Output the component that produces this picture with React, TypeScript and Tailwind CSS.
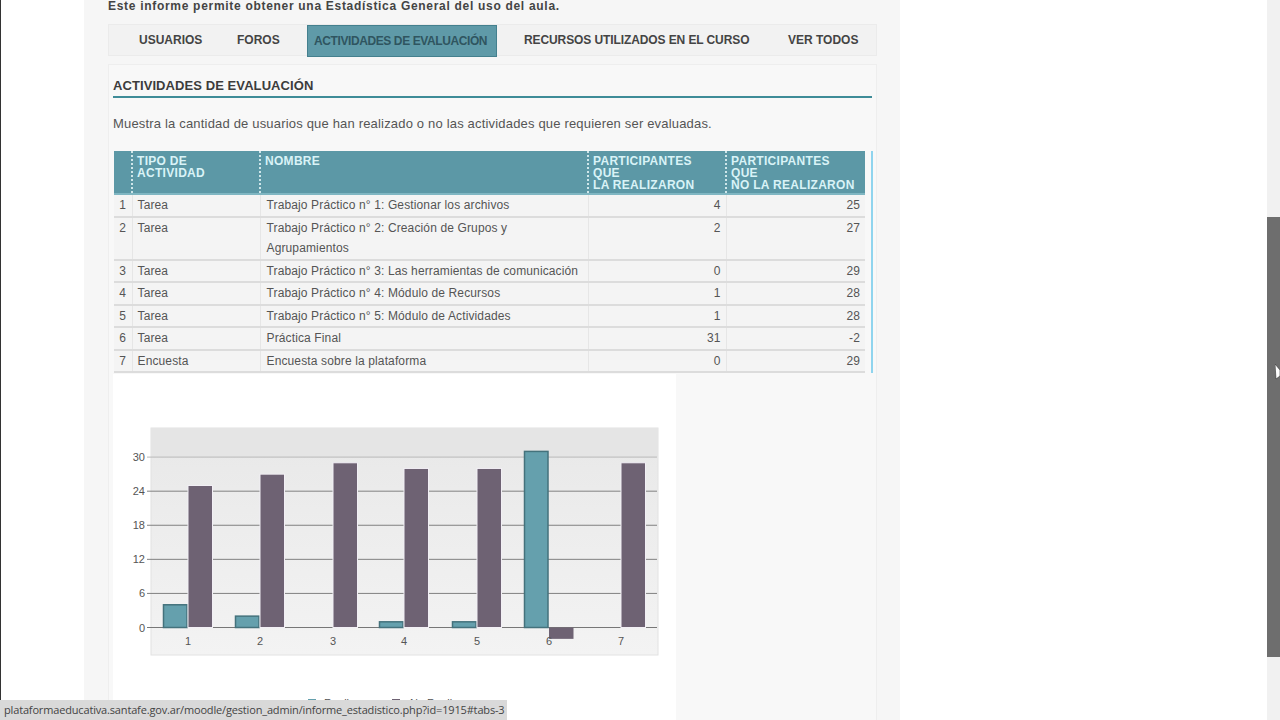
const font = { fontFamily: '"Liberation Sans", Arial, sans-serif' }

const rows = [
    { n: 1, tipo: "Tarea", nombre: "Trabajo Práctico n° 1: Gestionar los archivos", si: 4, no: 25 },
    { n: 2, tipo: "Tarea", nombre: "Trabajo Práctico n° 2: Creación de Grupos y Agrupamientos", si: 2, no: 27 },
    { n: 3, tipo: "Tarea", nombre: "Trabajo Práctico n° 3: Las herramientas de comunicación", si: 0, no: 29 },
    { n: 4, tipo: "Tarea", nombre: "Trabajo Práctico n° 4: Módulo de Recursos", si: 1, no: 28 },
    { n: 5, tipo: "Tarea", nombre: "Trabajo Práctico n° 5: Módulo de Actividades", si: 1, no: 28 },
    { n: 6, tipo: "Tarea", nombre: "Práctica Final", si: 31, no: -2 },
    { n: 7, tipo: "Encuesta", nombre: "Encuesta sobre la plataforma", si: 0, no: 29 },
]

const tabs = [
    { label: "USUARIOS", cls: "w-[124px] pl-[30px]" },
    { label: "FOROS", cls: "w-[74px] pl-[4px]" },
    { label: "ACTIVIDADES DE EVALUACIÓN", cls: "w-[190px] pl-[6px]" },
    { label: "RECURSOS UTILIZADOS EN EL CURSO", cls: "w-[264px] pl-[27px] tracking-[-0.1px]" },
    { label: "VER TODOS", cls: "w-[100px] pl-[27px]" },
]

function Tabs() {
    return (
        <div className="mt-[12px] flex h-[32px] w-[769px] border border-[#ebebeb] bg-[#f2f2f2]">
            {tabs.map((t, i) =>
                i === 2 ? (
                    <div key={t.label} className={`${t.cls} flex h-[32px] items-center whitespace-nowrap border border-[#44808e] bg-[#5f9aa8] text-[12px] font-bold tracking-[-0.4px] text-[#2f5560]`}>
                        {t.label}
                    </div>
                ) : (
                    <div key={t.label} className={`${t.cls} flex items-center whitespace-nowrap text-[12px] font-bold text-[#444]`}>
                        {t.label}
                    </div>
                )
            )}
        </div>
    )
}

function DataTable() {
    const th = "border-l-2 border-dotted border-[#cfe6ea] px-[4px] pt-[4px] text-left align-top text-[12px] font-bold leading-[12px] tracking-[0.3px] text-[#d9f3f7]"
    const td = "border-b-2 border-[#dcdcdc] px-[5px] align-top text-[12px] leading-[20.5px] tracking-[0.13px] text-[#555]"
    const cell = `${td} border-l border-l-[#e6e6e6]`
    return (
        <table className="w-[751px] table-fixed border-collapse">
            <colgroup>
                <col className="w-[18px]" />
                <col className="w-[128px]" />
                <col className="w-[328px]" />
                <col className="w-[138px]" />
                <col className="w-[139px]" />
            </colgroup>
            <thead>
                <tr className="h-[43px] border-b-2 border-[#7fb6c2] bg-[#5c98a6]">
                    <th></th>
                    <th className={th}>TIPO DE<br />ACTIVIDAD</th>
                    <th className={th}>NOMBRE</th>
                    <th className={th}>PARTICIPANTES<br />QUE<br />LA REALIZARON</th>
                    <th className={th}>PARTICIPANTES<br />QUE<br />NO LA REALIZARON</th>
                </tr>
            </thead>
            <tbody>
                {rows.map((r) => (
                    <tr key={r.n} className="bg-[#f4f4f4]">
                        <td className={`${td} text-center`}>{r.n}</td>
                        <td className={cell}>{r.tipo}</td>
                        <td className={`${cell} pl-[6px]`}>{r.nombre}</td>
                        <td className={`${cell} text-right`}>{r.si}</td>
                        <td className={`${cell} text-right`}>{r.no}</td>
                    </tr>
                ))}
            </tbody>
        </table>
    )
}

function Chart() {
    const zero = 253.5
    const unit = 5.68
    const centers = [75, 147, 220, 291, 364, 436, 508]
    return (
        <svg width="563" height="350" viewBox="0 0 563 350" className="mt-[1px] block" style={font}>
            <defs>
                <linearGradient id="fondo" x1="0" x2="0" y1="0" y2="1">
                    <stop offset="0" stopColor="#e8e8e8" />
                    <stop offset="1" stopColor="#f3f3f3" />
                </linearGradient>
            </defs>
            <rect width="563" height="350" fill="#ffffff" />
            <rect x="38" y="54" width="507" height="227" fill="url(#fondo)" stroke="#e2e2e2" />
            <rect x="38" y="54" width="507" height="29" fill="#e5e5e5" />
            {[0, 6, 12, 18, 24, 30].map((v) => {
                const y = zero - v * unit
                return (
                    <g key={v}>
                        <line x1="34" x2="544" y1={y} y2={y} stroke={v === 30 ? "#b9b9b9" : v === 0 ? "#777" : "#808080"} />
                        <text x="32" y={y + 4} textAnchor="end" fontSize="11" fill="#555">{v}</text>
                    </g>
                )
            })}
            {rows.map((r, i) => {
                const c = centers[i]
                const h1 = r.si * unit
                const h2 = r.no * unit
                return (
                    <g key={r.n}>
                        {r.si > 0 && (
                            <rect x={c - 24.5} y={zero - h1} width="23.5" height={h1} fill="#65a0ad" stroke="#44727c" strokeWidth="1.5" />
                        )}
                        {r.no > 0 ? (
                            <rect x={c} y={zero - h2} width="24.5" height={h2} fill="#6e6273" stroke="#f2eff5" />
                        ) : (
                            <rect x={c} y={zero} width="24.5" height={-h2} fill="#6e6273" />
                        )}
                        <text x={c} y={271} textAnchor="middle" fontSize="11" fill="#555">{r.n}</text>
                    </g>
                )
            })}
            {/* leyenda, tapada casi entera por la barra de estado */}
            <rect x="195" y="325" width="8" height="8" fill="#65a0ad" />
            <text x="211" y="333" fontSize="11" fill="#555">Realizaron</text>
            <rect x="279" y="325" width="8" height="8" fill="#6e6273" />
            <text x="297" y="333" fontSize="11" fill="#555">No Realizaron</text>
        </svg>
    )
}

export default function App() {
    return (
        <div className="relative flex h-[720px] w-[1280px] overflow-hidden bg-white" style={font}>
            <div className="w-[1px] bg-[#333]" />
            <div className="ml-[83px] h-full w-[816px] bg-[#f6f6f6] pl-[24px]">
                <p className="text-[12px] font-bold leading-[12px] tracking-[0.7px] text-[#444]">
                    Este informe permite obtener una Estadística General del uso del aula.
                </p>
                <Tabs />
                <div className="mt-[8px] h-[700px] w-[769px] border-x border-t border-[#eeeeee] bg-[#f8f8f8] pl-[4px] pt-[13px]">
                    <h2 className="mr-[4px] border-b-2 border-[#3f8c98] pb-[2px] text-[13px] font-bold leading-[16px] tracking-[0.08px] text-[#3c3c3c]">
                        ACTIVIDADES DE EVALUACIÓN
                    </h2>
                    <p className="mt-[18px] whitespace-nowrap text-[13px] leading-[16px] tracking-[0.18px] text-[#555]">
                        Muestra la cantidad de usuarios que han realizado o no las actividades que requieren ser evaluadas.
                    </p>
                    <div className="mt-[19px] flex">
                        <div className="ml-[1px]">
                            <DataTable />
                        </div>
                        <div className="ml-[6px] w-[2px] bg-[#8fd4ee]" />
                    </div>
                    <Chart />
                </div>
            </div>
            <div className="ml-auto flex h-full w-[13px] flex-col bg-[#f1f1f1] pt-[217px]">
                <div className="relative h-[440px] bg-[#6e6e6e]">
                    <svg width="5" height="16" viewBox="0 0 5 16" className="absolute right-0 top-[147px]">
                        <path d="M0 0 L5 6 L5 12 L1 15 Z" fill="#ffffff" stroke="#333333" strokeWidth="0.6" />
                    </svg>
                </div>
            </div>
            <div className="absolute bottom-0 left-0 flex h-[20px] w-[507px] items-center whitespace-nowrap bg-[#d9d9d9] pl-[4px] text-[11px] tracking-[-0.16px] text-[#444]" style={{ fontFamily: '"Open Sans", sans-serif' }}>
                plataformaeducativa.santafe.gov.ar/moodle/gestion_admin/informe_estadistico.php?id=1915#tabs-3
            </div>
        </div>
    )
}
